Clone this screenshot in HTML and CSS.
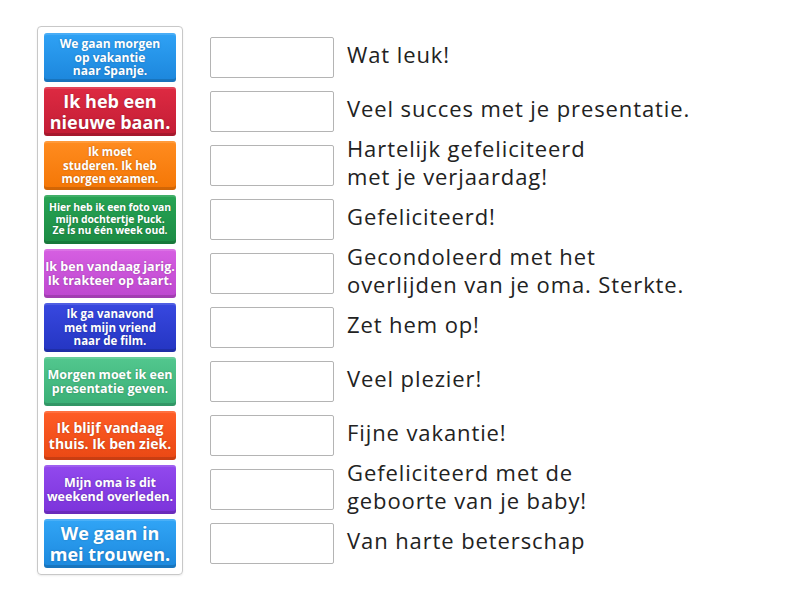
FILE: index.html
```html
<!DOCTYPE html>
<html>
<head>
<meta charset="utf-8">
<link rel="stylesheet" href="styles.css">
</head>
<body>
<div class="page">
  <div class="bank">
    <div class="tile t-blue f12">We gaan morgen<br>op vakantie<br>naar Spanje.</div>
    <div class="tile t-red f18">Ik heb een<br>nieuwe baan.</div>
    <div class="tile t-orange f115">Ik moet<br>studeren. Ik heb<br>morgen examen.</div>
    <div class="tile t-green f10">Hier heb ik een foto van<br>mijn dochtertje Puck.<br>Ze is nu één week oud.</div>
    <div class="tile t-pink f125">Ik ben vandaag jarig.<br>Ik trakteer op taart.</div>
    <div class="tile t-navy f115">Ik ga vanavond<br>met mijn vriend<br>naar de film.</div>
    <div class="tile t-mint f125">Morgen moet ik een<br>presentatie geven.</div>
    <div class="tile t-flame f14">Ik blijf vandaag<br>thuis. Ik ben ziek.</div>
    <div class="tile t-purple f125">Mijn oma is dit<br>weekend overleden.</div>
    <div class="tile t-sky f18">We gaan in<br>mei trouwen.</div>
  </div>
  <div class="targets">
    <div class="row"><div class="slot"></div><div class="label">Wat leuk!</div></div>
    <div class="row"><div class="slot"></div><div class="label">Veel succes met je presentatie.</div></div>
    <div class="row"><div class="slot"></div><div class="label">Hartelijk gefeliciteerd<br>met je verjaardag!</div></div>
    <div class="row"><div class="slot"></div><div class="label">Gefeliciteerd!</div></div>
    <div class="row"><div class="slot"></div><div class="label">Gecondoleerd met het<br>overlijden van je oma. Sterkte.</div></div>
    <div class="row"><div class="slot"></div><div class="label">Zet hem op!</div></div>
    <div class="row"><div class="slot"></div><div class="label">Veel plezier!</div></div>
    <div class="row"><div class="slot"></div><div class="label">Fijne vakantie!</div></div>
    <div class="row"><div class="slot"></div><div class="label">Gefeliciteerd met de<br>geboorte van je baby!</div></div>
    <div class="row"><div class="slot"></div><div class="label">Van harte beterschap</div></div>
  </div>
</div>
</body>
</html>
```
FILE: styles.css
```css
html, body {
  margin: 0;
  padding: 0;
  background: #ffffff;
}
body {
  font-family: "Open Sans", "Noto Sans", sans-serif;
  width: 800px;
  height: 600px;
  overflow: hidden;
}
.page {
  display: flex;
  align-items: flex-start;
  padding: 26px 0 0 37px;
}
.bank {
  width: 146px;
  box-sizing: border-box;
  border: 1px solid #c8c8c8;
  border-radius: 4px;
  padding: 6px;
  display: flex;
  flex-direction: column;
  gap: 5px;
  box-shadow: 0 1px 2px rgba(0,0,0,0.08);
}
.tile {
  height: 49px;
  box-sizing: border-box;
  border-radius: 3px;
  color: #fff;
  font-weight: 700;
  text-align: center;
  display: flex;
  align-items: center;
  justify-content: center;
  padding: 0 2px;
  white-space: nowrap;
  text-shadow: 0 0 2px rgba(0,0,0,0.25);
  box-shadow: inset 0 -3px 0 rgba(0,0,0,0.14), inset 0 2px 0 rgba(255,255,255,0.12);
}
.f12 { font-size: 12px; line-height: 13.5px; }
.f115 { font-size: 11.5px; line-height: 13.5px; }
.f125 { font-size: 12.5px; line-height: 14px; }
.f10 { font-size: 10.4px; line-height: 11.6px; letter-spacing: -0.1px; }
.f14 { font-size: 14px; line-height: 16px; }
.f18 { font-size: 18px; line-height: 21px; }

.t-blue { background: linear-gradient(#2fa2f5, #1c86dc); }
.t-red { background: linear-gradient(#de2a42, #c21d35); }
.t-orange { background: linear-gradient(#ff8c1f, #f47606); }
.t-green { background: linear-gradient(#27a454, #1c8b44); }
.t-pink { background: linear-gradient(#d65fe2, #bd47cf); }
.t-navy { background: linear-gradient(#3848e0, #2435c2); }
.t-mint { background: linear-gradient(#52c78e, #3aaf76); }
.t-flame { background: linear-gradient(#ff5d26, #ea4814); }
.t-purple { background: linear-gradient(#9249ee, #7b33da); }
.t-sky { background: linear-gradient(#31a5f6, #1c88dd); }

.targets {
  margin-left: 27px;
  padding-top: 4px;
  display: flex;
  flex-direction: column;
}
.row {
  height: 54px;
  display: flex;
  align-items: center;
}
.slot {
  width: 124px;
  height: 41px;
  box-sizing: border-box;
  border: 1px solid #b4b4b4;
  border-radius: 2px;
  background: #fff;
  flex: none;
}
.label {
  margin-left: 13px;
  margin-bottom: 7px;
  font-size: 22px;
  line-height: 28px;
  letter-spacing: 0.9px;
  color: #222;
  white-space: nowrap;
}
```
